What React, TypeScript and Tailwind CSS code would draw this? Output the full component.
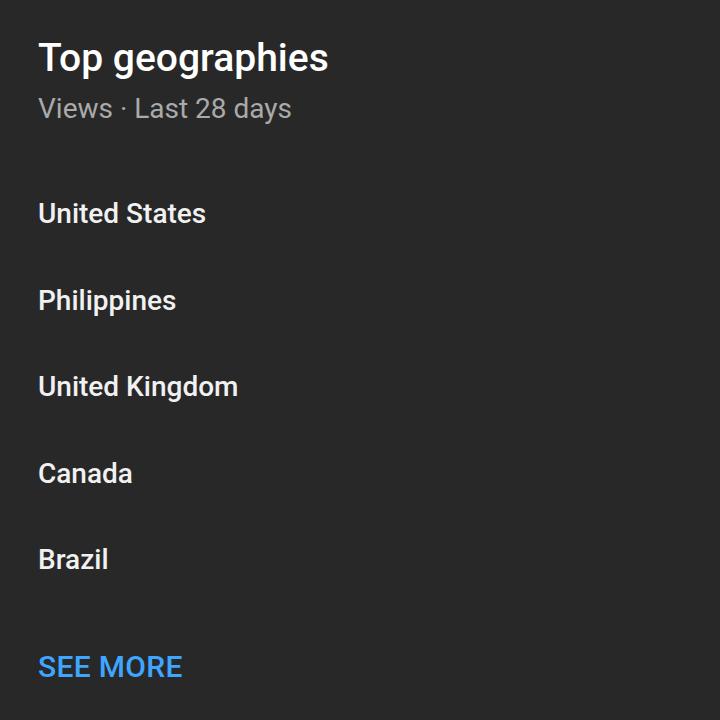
const countries = ["United States", "Philippines", "United Kingdom", "Canada", "Brazil"];

export default function App() {
  return (
    <div className="h-[720px] w-[720px] bg-[#282828] px-[38px] pt-[35px] font-['Roboto',sans-serif]">
      <h1 className="text-[39px] font-medium leading-[46px] text-white">Top geographies</h1>
      <p className="mt-[12px] text-[28px] leading-[32px] text-[#aaaaaa]">Views · Last 28 days</p>

      <ul className="mt-[46px] flex flex-col">
        {countries.map((c) => (
          <li key={c} className="flex h-[86.5px] items-center text-[28px] font-medium text-[#f1f1f1]">
            {c}
          </li>
        ))}
      </ul>

      <button className="mt-[46px] text-[30px] font-medium leading-[34px] tracking-[0.3px] text-[#3ea6ff]">SEE MORE</button>
    </div>
  );
}
